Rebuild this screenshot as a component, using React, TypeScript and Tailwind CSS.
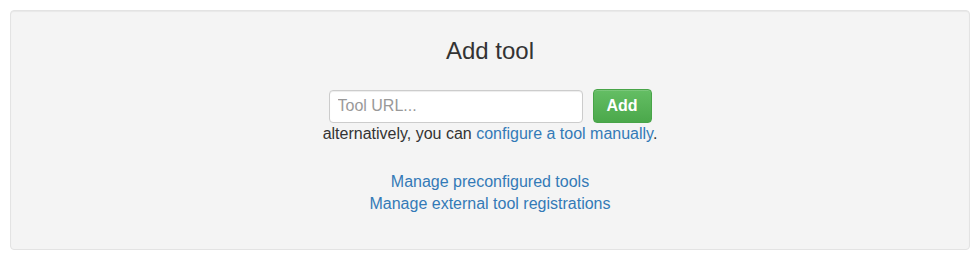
import React from 'react';

export default function App() {
  return (
    <div className="w-[980px] h-[263px] bg-white p-[10px] font-['Liberation_Sans',Arial,sans-serif] text-[#333] text-[16px] leading-[22px]">
      <div className="h-[240px] w-[960px] rounded-[4px] border border-[#e3e3e3] bg-[#f4f4f4] shadow-[inset_0_1px_1px_rgba(0,0,0,0.05)] flex flex-col items-center pt-[26px]">
        <h3 className="text-[24px] leading-[26px] text-[#333] translate-y-[1px]">Add tool</h3>
        <div className="mt-[26px] flex items-center gap-[10px]">
          <input
            type="text"
            placeholder="Tool URL..."
            className="w-[254px] h-[33px] rounded-[4px] border border-[#ccc] bg-white px-[8px] text-[16px] text-[#555] placeholder:text-[#999] shadow-[inset_0_1px_1px_rgba(0,0,0,0.075)] outline-none"
          />
          <button className="w-[59px] h-[34px] rounded-[4px] border border-[#48a448] bg-gradient-to-b from-[#64be64] to-[#4ba84b] text-white text-[16px] font-semibold shadow-[inset_0_1px_0_rgba(255,255,255,0.15)]">
            Add
          </button>
        </div>
        <p className="mt-[0px]">
          alternatively, you can <a href="#" className="text-[#337ab7]">configure a tool manually</a>.
        </p>
        <div className="mt-[26px] flex flex-col items-center">
          <a href="#" className="text-[#337ab7]">Manage preconfigured tools</a>
          <a href="#" className="text-[#337ab7]">Manage external tool registrations</a>
        </div>
      </div>
    </div>
  );
}
